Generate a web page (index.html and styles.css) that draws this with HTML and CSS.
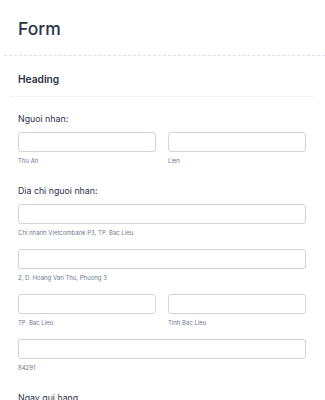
FILE: index.html
```html
<!DOCTYPE html>
<html lang="vi">
<head>
    <meta charset="UTF-8">
    <meta name="viewport" content="width=device-width, initial-scale=1.0">
    <title>Form</title>
    <link rel="stylesheet" href="styles.css">
</head>
<body>
    <div class="form-header">
        <h1>Form</h1>
    </div>

    <div class="form-body">
        <div class="section-head">
            <h2>Heading</h2>
        </div>

        <div class="field">
            <label class="field-label">Nguoi nhan:</label>
            <div class="row two">
                <div class="sub">
                    <input type="text">
                    <span class="sub-label">Thu An</span>
                </div>
                <div class="sub">
                    <input type="text">
                    <span class="sub-label">Lien</span>
                </div>
            </div>
        </div>

        <div class="field">
            <label class="field-label">Dia chi nguoi nhan:</label>
            <div class="row">
                <div class="sub">
                    <input type="text">
                    <span class="sub-label">Chi nhanh Vietcombank P3, TP. Bac Lieu</span>
                </div>
            </div>
            <div class="row">
                <div class="sub">
                    <input type="text">
                    <span class="sub-label">2, D. Hoang Van Thu, Phuong 3</span>
                </div>
            </div>
            <div class="row two">
                <div class="sub">
                    <input type="text">
                    <span class="sub-label">TP. Bac Lieu</span>
                </div>
                <div class="sub">
                    <input type="text">
                    <span class="sub-label">Tinh Bac Lieu</span>
                </div>
            </div>
            <div class="row">
                <div class="sub">
                    <input type="text">
                    <span class="sub-label">84291</span>
                </div>
            </div>
        </div>

        <div class="field">
            <label class="field-label">Ngay gui hang</label>
        </div>
    </div>
</body>
</html>
```

FILE: styles.css
```css
body {
    margin: 0;
    font-family: Inter, 'Noto Sans', sans-serif;
    color: #2c3345;
    background: #fff;
}

.form-header {
    margin-left: 4px;
    padding: 18px 14px 15px;
    border-bottom: 1px dashed #dfe1ea;
}

.form-header h1 {
    margin: 0;
    font-size: 17.5px;
    font-weight: 500;
    line-height: 22px;
}

.form-body {
    padding: 0 19px 0 18px;
}

.section-head {
    margin: 0 -7px;
    padding: 15px 7px 9px;
    border-bottom: 1px dotted #e8eaf1;
}

.section-head h2 {
    margin: 0;
    font-size: 10.2px;
    font-weight: 600;
    line-height: 16px;
}

.field {
    padding-top: 16px;
    padding-bottom: 4px;
}

.field-label {
    display: block;
    font-size: 8.8px;
    line-height: 12px;
    margin-bottom: 7px;
}

.row {
    display: flex;
    gap: 12px;
    margin-bottom: 12px;
}

.row:last-child {
    margin-bottom: 0;
}

.sub {
    flex: 1;
    display: flex;
    flex-direction: column;
}

input {
    box-sizing: border-box;
    width: 100%;
    height: 20px;
    margin: 0;
    border: 1px solid #d0d4df;
    border-radius: 3px;
    background: #fff;
}

.sub-label {
    margin-top: 4px;
    font-size: 6px;
    line-height: 9px;
    color: #6f7890;
}
```
